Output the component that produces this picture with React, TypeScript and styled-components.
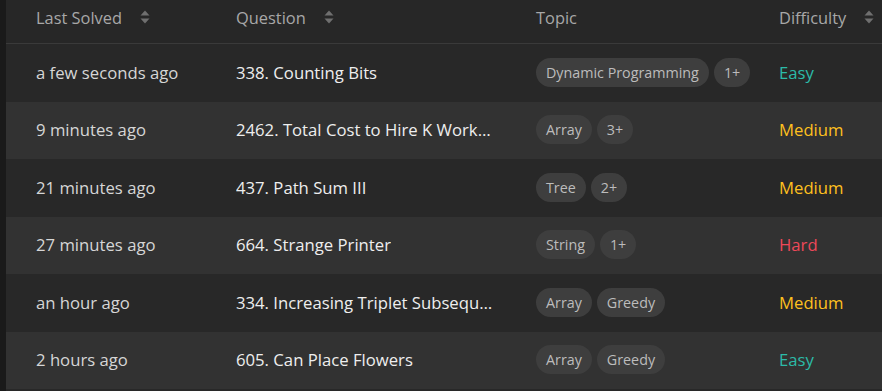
import React from 'react';
import styled, { createGlobalStyle } from 'styled-components';

const GlobalStyle = createGlobalStyle`
  html, body {
    margin: 0;
    padding: 0;
    background: #1a1a1a;
    font-family: "Open Sans", "Noto Sans", sans-serif;
  }
`;

const Page = styled.div`
  width: 882px;
  height: 391px;
  overflow: hidden;
  padding-left: 6px;
  box-sizing: border-box;
  background: #1a1a1a;
`;

const Table = styled.div`
  background: #282828;
  height: 100%;
`;

const cols = '200px 300px 243px 1fr';

const HeaderRow = styled.div`
  display: grid;
  grid-template-columns: ${cols};
  height: 43px;
  border-bottom: 1px solid #3a3a3a;
  background: #272727;
`;

const HeadCell = styled.div`
  display: flex;
  align-items: center;
  gap: 18px;
  padding: 0 0 9px 30px;
  color: #a8a8a8;
  font-size: 16.4px;
`;

const Row = styled.div<{ $alt: boolean }>`
  display: grid;
  grid-template-columns: ${cols};
  height: 57.5px;
  background: ${p => (p.$alt ? '#323232' : '#282828')};
`;

const Cell = styled.div`
  display: flex;
  align-items: center;
  padding: 0 0 1px 30px;
  min-width: 0;
  font-size: 16.7px;
  color: #d6d6d6;
`;

const Title = styled.span`
  color: #eeeeee;
  max-width: 260px;
  white-space: nowrap;
  overflow: hidden;
  text-overflow: ellipsis;
`;

const Chips = styled.div`
  display: flex;
  gap: 5px;
`;

const Chip = styled.span`
  background: #3e3e3e;
  color: #bcbcbc;
  font-size: 14.3px;
  height: 29px;
  line-height: 29px;
  padding: 0 10px;
  border-radius: 15px;
  white-space: nowrap;
`;

const Level = styled.span<{ $color: string }>`
  color: ${p => p.$color};
`;

const SortIcon = () => (
  <svg width="10" height="14" viewBox="0 0 10 14">
    <path d="M5 0.5 L9.5 5.5 H0.5 Z" fill="#6f6f6f" />
    <path d="M5 13.5 L9.5 8.5 H0.5 Z" fill="#6f6f6f" />
  </svg>
);

const levelColors: Record<string, string> = {
  Easy: '#2cbba8',
  Medium: '#ffc01e',
  Hard: '#ee4859',
};

const rows = [
  { when: 'a few seconds ago', q: '338. Counting Bits', tags: ['Dynamic Programming', '1+'], level: 'Easy' },
  { when: '9 minutes ago', q: '2462. Total Cost to Hire K Workers', tags: ['Array', '3+'], level: 'Medium' },
  { when: '21 minutes ago', q: '437. Path Sum III', tags: ['Tree', '2+'], level: 'Medium' },
  { when: '27 minutes ago', q: '664. Strange Printer', tags: ['String', '1+'], level: 'Hard' },
  { when: 'an hour ago', q: '334. Increasing Triplet Subsequence', tags: ['Array', 'Greedy'], level: 'Medium' },
  { when: '2 hours ago', q: '605. Can Place Flowers', tags: ['Array', 'Greedy'], level: 'Easy' },
];

export default function App() {
  return (
    <Page>
      <GlobalStyle />
      <Table>
        <HeaderRow>
          <HeadCell>Last Solved <SortIcon /></HeadCell>
          <HeadCell>Question <SortIcon /></HeadCell>
          <HeadCell>Topic</HeadCell>
          <HeadCell>Difficulty <SortIcon /></HeadCell>
        </HeaderRow>
        {rows.map((r, i) => (
          <Row key={r.q} $alt={i % 2 === 1}>
            <Cell>{r.when}</Cell>
            <Cell><Title>{r.q}</Title></Cell>
            <Cell>
              <Chips>
                {r.tags.map(t => <Chip key={t}>{t}</Chip>)}
              </Chips>
            </Cell>
            <Cell><Level $color={levelColors[r.level]}>{r.level}</Level></Cell>
          </Row>
        ))}
      </Table>
    </Page>
  );
}
